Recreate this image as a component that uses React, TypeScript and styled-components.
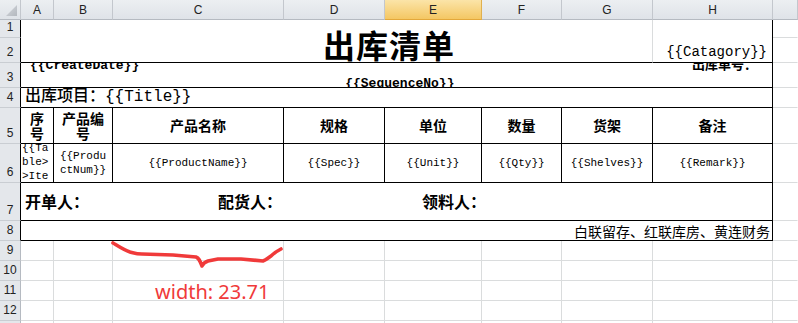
import React from "react";
import styled, { createGlobalStyle } from "styled-components";

const GlobalStyle = createGlobalStyle`
  html, body { margin: 0; padding: 0; background: #fff; }
  body { font-family: "Noto Sans CJK SC", "Noto Sans", sans-serif; overflow: hidden; }
`;

// widths / heights read off the sheet (first track = row header / column header)
const COLS = [21, 33, 59, 171, 101, 97, 80, 91, 120, 25];
const ROWS = [20, 18, 25, 25, 20, 36, 39, 38, 20, 20, 20, 20, 20, 20];
const LETTERS = ["A", "B", "C", "D", "E", "F", "G", "H", ""];

type Edge = "grid" | "ink" | "none";
const edge = (e: Edge) => (e === "ink" ? "#000" : e === "grid" ? "#dadcdd" : "transparent");

const CJK = `"Noto Sans CJK SC", "Noto Sans", sans-serif`;
const MONO = `"Liberation Mono", "Noto Sans CJK SC", monospace`;

const Sheet = styled.div`
  position: relative;
  display: grid;
  grid-template-columns: ${COLS.map((c) => c + "px").join(" ")};
  grid-template-rows: ${ROWS.map((r) => r + "px").join(" ")};
  width: 798px;
  height: 323px;
  overflow: hidden;
  color: #000;
`;

const Corner = styled.div`
  position: relative;
  grid-column: 1;
  grid-row: 1;
  box-sizing: border-box;
  background: linear-gradient(#eceff2, #dfe3e8);
  border-right: 1px solid #c3c7cd;
  border-bottom: 1px solid #b5bac1;
  &::after {
    content: "";
    position: absolute;
    right: 3px;
    bottom: 3px;
    width: 11px;
    height: 11px;
    background: linear-gradient(135deg, #d5d8dd, #b3b8be);
    clip-path: polygon(100% 0, 100% 100%, 0 100%);
  }
`;

const ColHead = styled.div<{ $col: number; $active?: boolean }>`
  grid-column: ${(p) => p.$col};
  grid-row: 1;
  box-sizing: border-box;
  display: flex;
  align-items: center;
  justify-content: center;
  font: 12px/14px "Liberation Sans", Arial, sans-serif;
  color: #222;
  background: ${(p) =>
    p.$active ? "linear-gradient(#fbe4a8, #f4c763)" : "linear-gradient(#eceff2, #dfe3e8)"};
  border-right: 1px solid ${(p) => (p.$active ? "#e0b04f" : "#c3c7cd")};
  border-bottom: 1px solid ${(p) => (p.$active ? "#e3a83b" : "#b5bac1")};
`;

const RowHead = styled.div<{ $row: number; $ink?: boolean }>`
  grid-column: 1;
  grid-row: ${(p) => p.$row};
  box-sizing: border-box;
  display: flex;
  align-items: flex-end;
  justify-content: center;
  padding-bottom: 3px;
  font: 12px/14px "Liberation Sans", Arial, sans-serif;
  color: #222;
  background: #e4e7eb;
  border-right: 1px solid ${(p) => (p.$ink ? "#000" : "#b5bac1")};
  border-bottom: 1px solid #c9cdd2;
`;

const Cell = styled.div<{ $col: number; $row: number; $cs?: number; $rs?: number; $r?: Edge; $b?: Edge }>`
  grid-column: ${(p) => p.$col} / span ${(p) => p.$cs ?? 1};
  grid-row: ${(p) => p.$row} / span ${(p) => p.$rs ?? 1};
  box-sizing: border-box;
  min-width: 0;
  min-height: 0;
  overflow: hidden;
  background: #fff;
  border-right: 1px solid ${(p) => edge(p.$r ?? "grid")};
  border-bottom: 1px solid ${(p) => edge(p.$b ?? "grid")};
`;

const TitleCell = styled(Cell)`
  display: flex;
  align-items: flex-end;
  padding: 0 0 2px 302px;
  font: 700 32px/32px ${CJK};
  letter-spacing: 1px;
`;

const CategoryCell = styled(Cell)`
  display: flex;
  align-items: flex-end;
  justify-content: flex-end;
  padding: 0 5px 2px 0;
  font: 14px/16px ${MONO};
  white-space: nowrap;
`;

const InfoCell = styled(Cell)`
  display: flex;
  padding: 0 15px 0 9px;
`;

const InfoText = styled.span<{ $at: "top" | "bottom"; $gap?: string }>`
  align-self: ${(p) => (p.$at === "top" ? "flex-start" : "flex-end")};
  margin-top: ${(p) => (p.$at === "top" ? "-4px" : "0")};
  margin-bottom: ${(p) => (p.$at === "bottom" ? "-3px" : "0")};
  margin-left: ${(p) => p.$gap ?? "0"};
  font: 700 13px/13px ${MONO};
  white-space: nowrap;
`;

const ProjectCell = styled(Cell)`
  display: flex;
  align-items: center;
  padding-left: 4px;
  font: 500 16px/19px ${MONO};
  white-space: nowrap;
`;

const HeadCell = styled(Cell)`
  display: flex;
  align-items: center;
  justify-content: center;
  padding: 0 3px;
  text-align: center;
  font: 700 14px/15px ${CJK};
`;

const ValueCell = styled(Cell)<{ $spill?: boolean }>`
  display: flex;
  align-items: ${(p) => (p.$spill ? "flex-start" : "center")};
  justify-content: ${(p) => (p.$spill ? "flex-start" : "center")};
  padding: ${(p) => (p.$spill ? "0 2px 0 1px" : "0 4px")};
  text-align: ${(p) => (p.$spill ? "left" : "center")};
  font: 11px/14px ${MONO};
  word-break: break-all;
`;

const SpillText = styled.span`
  margin-top: -3px;
`;

const SignCell = styled(Cell)`
  display: flex;
  align-items: center;
  padding: 0 0 2px 4px;
  font: 700 16px/20px ${CJK};
`;

const SignLabel = styled.span<{ $w?: number }>`
  flex: 0 0 ${(p) => (p.$w ? p.$w + "px" : "auto")};
  white-space: nowrap;
`;

const NoteCell = styled(Cell)`
  display: flex;
  align-items: center;
  justify-content: flex-end;
  padding-right: 2px;
  font: 400 14px/16px ${CJK};
  white-space: nowrap;
`;

const Scribble = styled.svg`
  position: absolute;
  left: 0;
  top: 0;
  width: 798px;
  height: 323px;
  pointer-events: none;
`;

const WidthNote = styled.div`
  position: absolute;
  left: 155px;
  top: 282px;
  font: 20px/20px "Noto Sans", "Open Sans", sans-serif;
  color: #f03a3a;
  white-space: nowrap;
`;

const heads = ["序号", "产品编号", "产品名称", "规格", "单位", "数量", "货架", "备注"];
const values = ["{{Table>>Items}}", "{{ProductNum}}", "{{ProductName}}", "{{Spec}}", "{{Unit}}", "{{Qty}}", "{{Shelves}}", "{{Remark}}"];

const App = () => {
  const last = 9; // column H
  return (
    <Sheet>
      <GlobalStyle />
      <Corner />
      {LETTERS.map((l, i) => (
        <ColHead key={i} $col={i + 2} $active={l === "E"}>
          {l}
        </ColHead>
      ))}
      {ROWS.slice(1).map((_, i) => (
        <RowHead key={i} $row={i + 2} $ink={i < 8}>
          {i + 1}
        </RowHead>
      ))}

      {/* rows 1-2 */}
      <TitleCell $col={2} $row={2} $cs={7} $rs={2} $b="ink">
        出库清单
      </TitleCell>
      <CategoryCell $col={last} $row={2} $rs={2} $r="ink" $b="ink">
        {"{{Catagory}}"}
      </CategoryCell>

      {/* row 3 */}
      <InfoCell $col={2} $row={4} $cs={8} $r="ink" $b="ink">
        <InfoText $at="top">{"{{CreateDate}}"}</InfoText>
        <InfoText $at="bottom" $gap="206px">{"{{SequenceNo}}"}</InfoText>
        <InfoText $at="top" $gap="auto">出库单号：</InfoText>
      </InfoCell>

      {/* row 4 */}
      <ProjectCell $col={2} $row={5} $cs={8} $r="ink" $b="ink">
        出库项目：{"{{Title}}"}
      </ProjectCell>

      {/* rows 5-6 */}
      {heads.map((h, i) => (
        <HeadCell key={h} $col={i + 2} $row={6} $r="ink" $b="ink">
          {h}
        </HeadCell>
      ))}
      {values.map((v, i) => (
        <ValueCell key={v} $col={i + 2} $row={7} $r="ink" $b="ink" $spill={i === 0}>
          {i === 0 ? <SpillText>{v}</SpillText> : v}
        </ValueCell>
      ))}

      {/* row 7 */}
      <SignCell $col={2} $row={8} $cs={8} $r="ink" $b="ink">
        <SignLabel $w={193}>开单人：</SignLabel>
        <SignLabel $w={204}>配货人：</SignLabel>
        <SignLabel>领料人：</SignLabel>
      </SignCell>

      {/* row 8 */}
      <NoteCell $col={2} $row={9} $cs={8} $r="ink" $b="ink">
        白联留存、红联库房、黄连财务
      </NoteCell>

      {/* empty rows 9-13 */}
      {[10, 11, 12, 13, 14].map((r) =>
        [2, 3, 4, 5, 6, 7, 8, 9].map((c) => <Cell key={r + "-" + c} $col={c} $row={r} />)
      )}

      {/* column I */}
      {ROWS.slice(1).map((_, i) => (
        <Cell key={"i" + i} $col={10} $row={i + 2} $r="none" />
      ))}

      <Scribble viewBox="0 0 798 323">
        <path
          d="M113 243 C118 246 124 250 130 252 C134 253 137 254 142 254 L173 255 L196 257 C199 258 200 261 202 266 C203 264 205 262 208 261 L218 259 L241 259 L263 261 C266 260 268 258 271 256 C274 253 277 251 281 249"
          fill="none"
          stroke="#f03a3a"
          strokeWidth={3.6}
          strokeLinecap="round"
          strokeLinejoin="round"
        />
      </Scribble>
      <WidthNote>width: 23.71</WidthNote>
    </Sheet>
  );
};

export default App;
